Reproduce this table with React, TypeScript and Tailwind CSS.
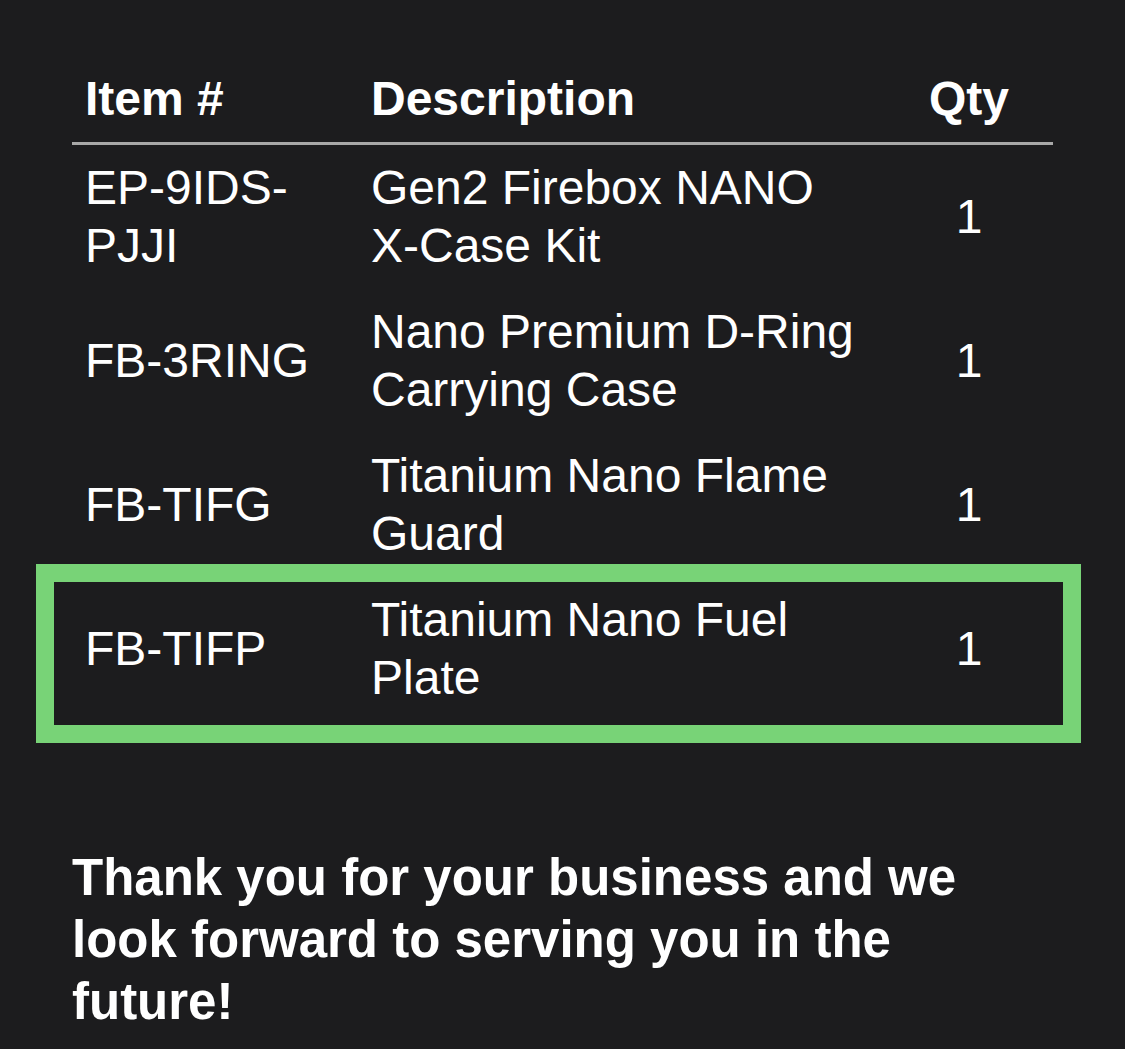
export default function App() {
  const rows = [
    { item: "EP-9IDS-PJJI", desc: "Gen2 Firebox NANO X-Case Kit", qty: "1" },
    { item: "FB-3RING", desc: "Nano Premium D-Ring Carrying Case", qty: "1" },
    { item: "FB-TIFG", desc: "Titanium Nano Flame Guard", qty: "1" },
    { item: "FB-TIFP", desc: "Titanium Nano Fuel Plate", qty: "1" },
  ];
  return (
    <div
      className="relative min-h-[1049px] w-full bg-[#1c1c1e] px-[72px] pt-[56px] text-white"
      style={{ fontFamily: '"Liberation Sans", Arial, Helvetica, sans-serif' }}
    >
      <table className="w-full table-fixed border-collapse text-[48px] leading-[58px]">
        <colgroup>
          <col className="w-[286px]" />
          <col className="w-[527px]" />
          <col className="w-[168px]" />
        </colgroup>
        <thead>
          <tr className="border-b-[3px] border-[#a8a8a8]">
            <th className="px-[13px] py-[14px] text-left font-bold">Item #</th>
            <th className="px-[13px] py-[14px] text-left font-bold">Description</th>
            <th className="px-[13px] py-[14px] text-center font-bold">Qty</th>
          </tr>
        </thead>
        <tbody>
          {rows.map((r) => (
            <tr key={r.item}>
              <td className="px-[13px] py-[14px] align-middle">{r.item}</td>
              <td className="px-[13px] py-[14px] align-middle">{r.desc}</td>
              <td className="px-[13px] py-[14px] text-center align-middle">{r.qty}</td>
            </tr>
          ))}
        </tbody>
      </table>
      <p className="mt-[126px] text-[51px] font-bold leading-[62px]">
        Thank you for your business and we look forward to serving you in the future!
      </p>
      <div className="pointer-events-none absolute left-[36px] top-[564px] h-[179px] w-[1045px] border-[18px] border-[#78d377]" />
    </div>
  );
}
